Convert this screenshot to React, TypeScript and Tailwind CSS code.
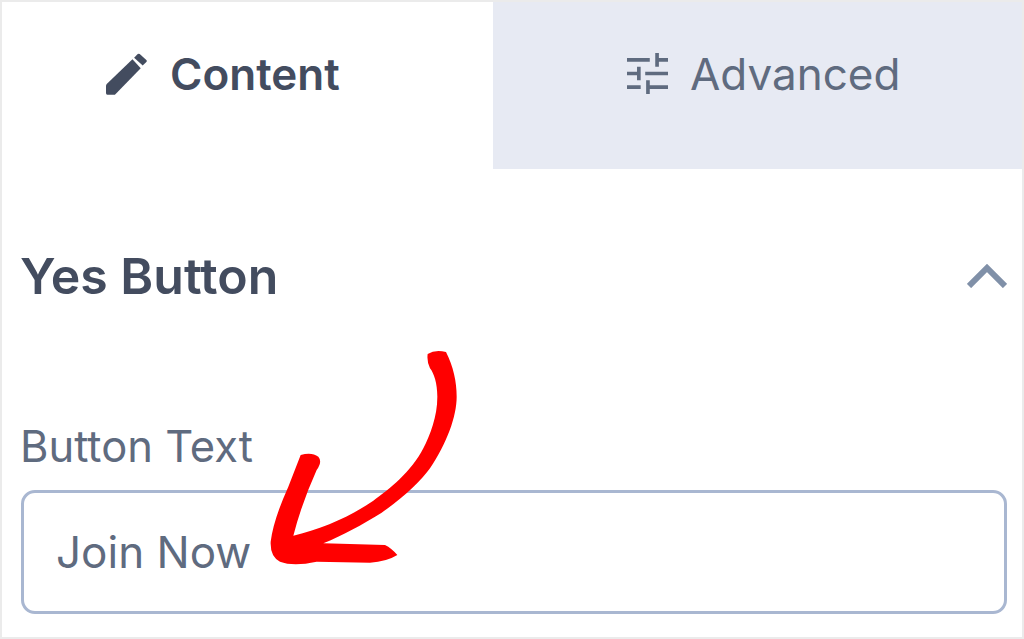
export default function App() {
  return (
    <div className="relative flex h-[639px] w-[1024px] flex-col border-2 border-[#ebebeb] bg-white font-['Inter','Liberation_Sans',sans-serif]">
      <div className="flex h-[167px] shrink-0">
        <div className="flex w-[491px] items-start gap-[23px] bg-white pt-[44px] pl-[104px]">
          <svg viewBox="0 0 124 125" className="mt-[7px] h-[42px] w-[41px] fill-[#434c5f]">
            <path d="M0 98 Q0 95 3 92 L80 18 L105 45 L27 125 L4 125 Q0 125 0 120 Z" />
            <path d="M85 13 L96 2 Q99 0 102 2 L122 20 Q125 23 122 26 L111 37 Z" />
          </svg>
          <span className="text-[44px] leading-[56px] font-semibold text-[#434c5f]">Content</span>
        </div>
        <div className="flex flex-1 items-start gap-[22px] bg-[#e7eaf3] pt-[44px] pl-[134px]">
          <svg viewBox="3 3 18 18" className="mt-[7px] h-[41px] w-[41px] fill-[#5f6b7f]">
            <path d="M3 17.2v1.6h6v-1.6H3zM3 5.2v1.6h10V5.2H3zm10 15.8v-2.2h8v-1.6h-8V15h-1.6v6H13zM7.4 9v2.2H3v1.6h4.4V15H9V9H7.4zm13.6 3.8v-1.6H11v1.6h10zm-5.6-3.8H17V6.8h4V5.2h-4V3h-1.6v6z" />
          </svg>
          <span className="text-[44px] leading-[56px] font-normal text-[#5f6b7f]">Advanced</span>
        </div>
      </div>
      <div className="flex flex-1 flex-col px-[19px]">
        <div className="mt-[77px] -mr-[4px] flex items-center justify-between">
          <span className="-ml-[1px] text-[50px] leading-[60px] font-semibold text-[#434c5f]">Yes Button</span>
          <svg viewBox="0 0 40 24" className="h-[24px] w-[40px] fill-none stroke-[#8090a8] stroke-[6]">
            <path d="M2 22 L20 4 L38 22" />
          </svg>
        </div>
        <div className="mt-[115px] -ml-[1px] text-[43.5px] leading-[50px] text-[#5f6b7f]">Button Text</div>
        <div className="mt-[19px] flex h-[124px] w-[986px] items-center rounded-[14px] border-[3px] border-[#a9b7d1] pl-[32px] text-[44px] text-[#5f6b7f]">
          Join Now
        </div>
      </div>
      <svg viewBox="0 0 720 720" className="absolute top-[338px] left-[228px] h-[240px] w-[240px] fill-[#ff0000]">
        <path d="M593 42 Q615 28 648 36 C670 80 680 125 680 170 C680 230 650 310 600 385 C575 420 525 470 455 518 C395 555 340 585 280 610 L465 615 Q485 625 502 645 Q470 665 420 668 L260 665 Q190 680 150 665 Q120 650 122 605 Q130 540 175 440 L212 345 Q245 335 265 350 Q278 365 260 390 Q215 490 190 587 C280 565 360 530 430 482 C475 450 545 395 580 325 C600 285 622 230 622 170 C622 130 612 100 600 85 Q590 65 593 42 Z" />
      </svg>
    </div>
  );
}
